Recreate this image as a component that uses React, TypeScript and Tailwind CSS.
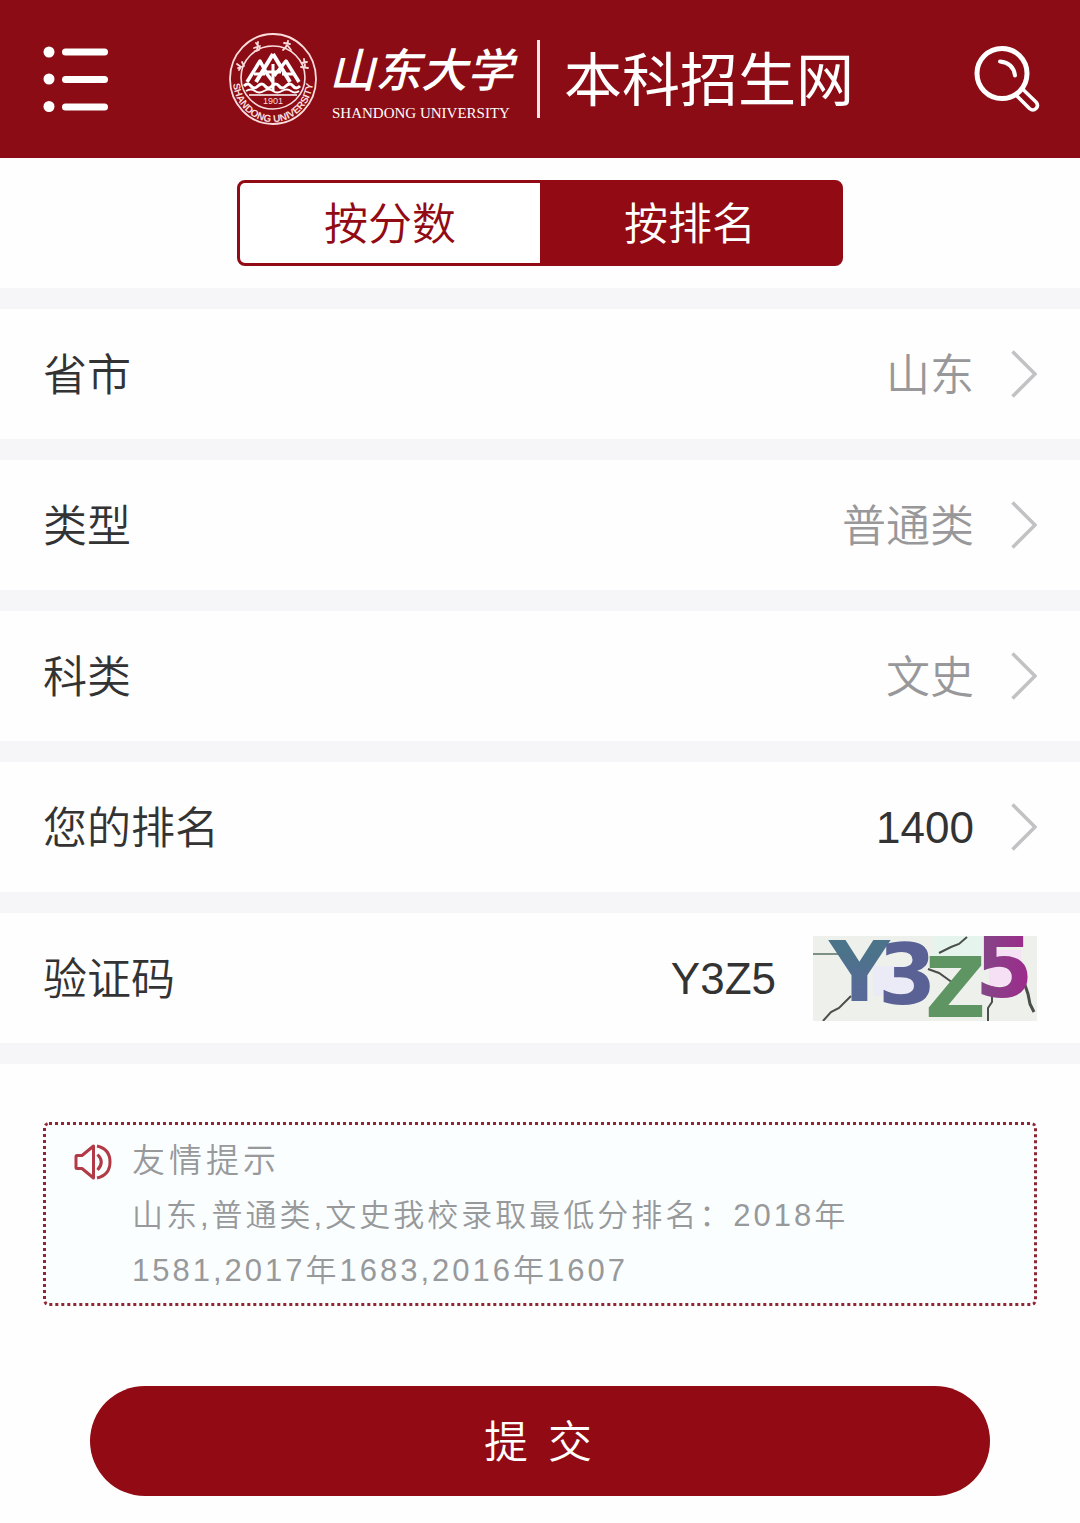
import { useState } from "react";
import type { ReactNode } from "react";

type Mode = "score" | "rank";

const PROVINCES = ["山东", "北京", "江苏", "河南"];
const TYPES = ["普通类", "艺术类", "国家专项"];
const SUBJECTS = ["文史", "理工"];

function MenuIcon() {
  return (
    <svg width="66" height="67" viewBox="0 0 66 67" fill="#fff" aria-hidden="true">
      <circle cx="6" cy="6" r="5.5" />
      <circle cx="6" cy="33" r="5.5" />
      <circle cx="6" cy="60.5" r="5.5" />
      <rect x="19" y="2.5" width="46" height="7" rx="3.5" />
      <rect x="19" y="30" width="46" height="7" rx="3.5" />
      <rect x="19" y="57.5" width="46" height="7" rx="3.5" />
    </svg>
  );
}

function SearchIcon() {
  return (
    <svg width="66" height="67" viewBox="0 0 66 67" fill="none" stroke="#fff" aria-hidden="true">
      <circle cx="28" cy="27.5" r="25" strokeWidth="5" />
      <path d="M26 15.500Q39.500 17 41 29.500" strokeWidth="4" strokeLinecap="round" />
      <path
        d="M42 49L55.500 62.500Q59 65.500 62 62.500Q65 59.500 62 56L48.500 43"
        strokeWidth="3.5"
        strokeLinejoin="round"
      />
    </svg>
  );
}

function Seal() {
  return (
    <svg width="88" height="92" viewBox="0 0 88 92" fill="none" stroke="#fbdcdc" aria-hidden="true">
      <ellipse cx="44" cy="46" rx="43" ry="45" strokeWidth="1.8" />
      <ellipse cx="44" cy="44.5" rx="32" ry="31.5" strokeWidth="1.6" />
      {/* characters round the top of the ring */}
      <g strokeWidth="1.8" strokeLinecap="round">
        <path d="M8 31l4 3l-2 3M9 35l6-2M13 29l2 4" />
        <path d="M27 10l4 5M25 15l6-2M29 9l-1 9M26 18l4-1" />
        <path d="M55 10l6 1M59 8q-1 6-5 9M59 13l3 4" />
        <path d="M73 30l5-1M75 26l1 7M72 34l7 1" />
      </g>
      {/* mountains over water */}
      <g stroke="#fff" strokeLinejoin="round">
        <path d="M18 49L31 28L38 41L44 49" strokeWidth="3.5" />
        <path d="M44 21L27 49M44 21L61 49" strokeWidth="4" />
        <path d="M45 43L57 28L70 49" strokeWidth="3.5" />
        <path d="M36 39H52M25 41H36M53 41H65M44 31V58" strokeWidth="3" />
        <path d="M15 53q4-4 7 0t7 0t7 0t7 0t7 0t7 0t7 0t7 0" strokeWidth="3" />
        <path d="M17 58q5-3 9 0t9 0t9 0t9 0t9 0t8 0" strokeWidth="2" />
        <path d="M20 62H68" strokeWidth="1.500" />
      </g>
      <text
        x="44"
        y="71"
        textAnchor="middle"
        fill="#fbdcdc"
        stroke="none"
        className="font-['Liberation_Sans',sans-serif] text-[9px]"
      >
        1901
      </text>
      <path id="seal-arc" d="M4 47A40 42 0 0 0 84 47" stroke="none" />
      <text
        fill="#fbdcdc"
        stroke="none"
        textAnchor="middle"
        className="font-['Liberation_Sans',sans-serif] text-[10px] font-bold"
      >
        <textPath href="#seal-arc" startOffset="50%">
          SHANDONG UNIVERSITY
        </textPath>
      </text>
    </svg>
  );
}

function SpeakerIcon() {
  return (
    <svg width="38" height="36" viewBox="0 0 38 36" fill="none" stroke="#b23a47" aria-hidden="true">
      <path d="M2 12.500Q2 11.500 3 11.500H8L19.500 2V34L8 24.500H3Q2 24.500 2 23.500Z" strokeWidth="3" strokeLinejoin="round" />
      <path d="M23.500 10.500Q31 18 23.500 26" strokeWidth="3" />
      <path d="M23 2Q36 5 36 18Q36 31 23 34" strokeWidth="3" />
    </svg>
  );
}

function Chevron() {
  return (
    <svg
      width="26"
      height="48"
      viewBox="0 0 26 48"
      fill="none"
      stroke="#c2c2c5"
      strokeWidth="3.5"
      className="shrink-0"
      aria-hidden="true"
    >
      <path d="M1.500 1.500L24 24L1.500 46.500" />
    </svg>
  );
}

function Captcha() {
  return (
    <svg width="224" height="85" viewBox="0 0 224 85" aria-hidden="true">
      <defs>
        <linearGradient id="cap-y" x1="0" y1="0" x2="0" y2="1">
          <stop offset="0.3" stopColor="#4b7389" />
          <stop offset="0.7" stopColor="#586a98" />
        </linearGradient>
        <linearGradient id="cap-5" x1="0" y1="0" x2="1" y2="0">
          <stop offset="0" stopColor="#804a86" />
          <stop offset="1" stopColor="#a0288c" />
        </linearGradient>
      </defs>
      <rect width="224" height="85" fill="#eef0ec" />
      <path d="M60 30H104V60H60Z" fill="#ebeaf7" />
      <path d="M176 14H208V50H176Z" fill="#f6e0f5" />
      <path d="M120 0H168V20H120Z" fill="#e6f4ee" />
      <g fill="none" stroke="#4a4f4a" strokeWidth="2">
        <path d="M0 18H30" stroke="#7e8f86" />
        <path d="M10 85L18 76L26 72L38 60" />
        <path d="M126 17L138 11L146 8L154 1" />
        <path d="M115 33L126 37L140 47" />
        <path d="M179 50V66L175 72V85" />
        <path d="M211 46L215 58L217 68L221 76" strokeWidth="3" />
      </g>
      <g className="font-['DejaVu_Sans',sans-serif] text-[84px] font-bold">
        <text x="16" y="65" fill="url(#cap-y)">Y</text>
        <text x="65" y="68" fill="#596195">3</text>
        <text x="112" y="81" fill="#5f9463">Z</text>
        <text x="162" y="61" fill="url(#cap-5)">5</text>
      </g>
    </svg>
  );
}

function Row({ label, htmlFor, children }: { label: string; htmlFor: string; children: ReactNode }) {
  return (
    <div className="flex h-[130px] items-center justify-between bg-[#fefefe] px-[43px]">
      <label htmlFor={htmlFor} className="shrink-0 pt-1 text-[#333]">
        {label}
      </label>
      {children}
    </div>
  );
}

function PickerRow({ id, label, options }: { id: string; label: string; options: string[] }) {
  const [value, setValue] = useState(options[0]);

  return (
    <Row label={label} htmlFor={id}>
      <div className="flex flex-1 items-center gap-[37px]">
        <select
          id={id}
          value={value}
          onChange={(e) => setValue(e.target.value)}
          className="min-w-0 flex-1 appearance-none bg-transparent pt-1 text-[#98989a] outline-none [text-align-last:right]"
        >
          {options.map((option) => (
            <option key={option}>{option}</option>
          ))}
        </select>
        <Chevron />
      </div>
    </Row>
  );
}

export default function App() {
  const [mode, setMode] = useState<Mode>("rank");
  const [rank, setRank] = useState("1400");
  const [code, setCode] = useState("Y3Z5");

  const tabClass = (active: boolean) =>
    active ? "flex-1 bg-[#920a13] pt-1 text-white" : "flex-1 bg-white pt-1 text-[#920a13]";

  return (
    <div
      lang="zh-CN"
      className="min-h-screen bg-[#fefefe] font-['Liberation_Sans','Noto_Sans_CJK_SC',sans-serif] text-[44px] leading-[66px] font-[350]"
    >
      <header className="flex h-[158px] items-center justify-between bg-[#8b0c14] pr-10 pl-[43px] text-white">
        <button type="button" aria-label="菜单">
          <MenuIcon />
        </button>
        <a href="#" className="flex items-center">
          <Seal />
          <span className="ml-3 flex flex-col items-center pt-1">
            <span className="text-[46px] leading-[64px] font-medium italic">山东大学</span>
            <span className="font-['Liberation_Serif',serif] text-[15px] leading-5 whitespace-nowrap">
              SHANDONG UNIVERSITY
            </span>
          </span>
          <span className="ml-6 h-[78px] w-[3px] bg-[#fbe6e6]" />
          <span className="ml-6 pt-1 text-[58px] leading-[80px] font-normal whitespace-nowrap">本科招生网</span>
        </a>
        <button type="button" aria-label="搜索">
          <SearchIcon />
        </button>
      </header>

      <div className="flex h-[130px] items-center justify-center">
        <div className="flex h-[86px] w-[606px] overflow-hidden rounded-lg border-3 border-[#920a13] bg-[#920a13]">
          <button
            type="button"
            aria-pressed={mode === "score"}
            onClick={() => setMode("score")}
            className={tabClass(mode === "score")}
          >
            按分数
          </button>
          <button
            type="button"
            aria-pressed={mode === "rank"}
            onClick={() => setMode("rank")}
            className={tabClass(mode === "rank")}
          >
            按排名
          </button>
        </div>
      </div>

      <form onSubmit={(e) => e.preventDefault()}>
        <div className="flex flex-col gap-[21px] bg-[#f6f5f8] py-[21px]">
          <PickerRow id="province" label="省市" options={PROVINCES} />
          <PickerRow id="type" label="类型" options={TYPES} />
          <PickerRow id="subject" label="科类" options={SUBJECTS} />
          <Row label="您的排名" htmlFor="rank">
            <div className="flex flex-1 items-center gap-[37px]">
              <input
                id="rank"
                type="text"
                inputMode="numeric"
                value={rank}
                onChange={(e) => setRank(e.target.value)}
                className="min-w-0 flex-1 bg-transparent pt-0.5 text-right text-[#333] outline-none"
              />
              <Chevron />
            </div>
          </Row>
          <Row label="验证码" htmlFor="code">
            <div className="flex flex-1 items-center gap-[37px]">
              <input
                id="code"
                type="text"
                value={code}
                onChange={(e) => setCode(e.target.value)}
                className="min-w-0 flex-1 bg-transparent pt-0.5 text-right text-[#333] outline-none"
              />
              <button type="button" aria-label="刷新验证码" className="shrink-0">
                <Captcha />
              </button>
            </div>
          </Row>
        </div>

        <section className="mx-[43px] mt-[58px] flex rounded-md border-3 border-dotted border-[#8f2632] bg-[#fbfeff] px-7 pt-2 pb-[5px] text-[#97999b]">
          <div className="mt-[11px] w-[58px] shrink-0">
            <SpeakerIcon />
          </div>
          <div>
            <h2 className="text-[33px] leading-[55px] font-[350] tracking-[4px]">友情提示</h2>
            <p className="text-[31px] leading-[55px] tracking-[3px]">
              山东,普通类,文史我校录取最低分排名：2018年
              <br />
              1581,2017年1683,2016年1607
            </p>
          </div>
        </section>

        <div className="px-[90px] pt-20 pb-7">
          <button
            type="submit"
            className="h-[110px] w-full rounded-full bg-[#920a13] pt-1 tracking-[4px] text-white"
          >
            提 交
          </button>
        </div>
      </form>
    </div>
  );
}
